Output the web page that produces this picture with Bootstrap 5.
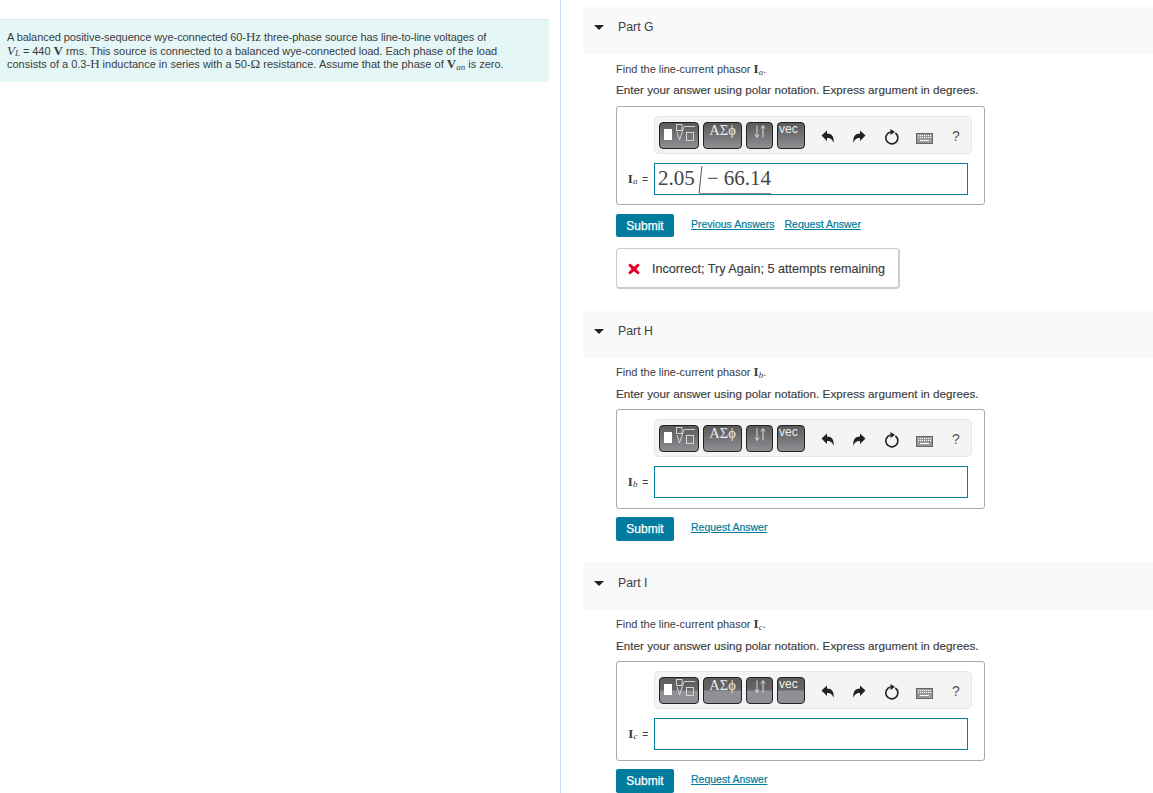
<!DOCTYPE html>
<html lang="en">
<head>
<meta charset="UTF-8" />
<title>Part G, H, I</title>
<link href="https://cdn.jsdelivr.net/npm/bootstrap@5.3.0/dist/css/bootstrap.min.css" rel="stylesheet" />
<style>
  html, body { height: 793px; overflow: hidden; }
  body { font-family: "Liberation Sans", Arial, sans-serif; font-size: 11px; color: #3c3c3c; background: #fff; }
  .left-pane { width: 561px; height: 793px; border-right: 1px solid #c5d9ea; padding-top: 19px; flex: none; }
  .intro-box { width: 549px; height: 63px; background: #e5f6f7; border-top: 1px solid #dde6e6; padding: 10px 0 0 7px; white-space: nowrap; }
  .intro-line { height: 13.5px; line-height: 13.5px; }
  .intro-first { letter-spacing: -.07px; }
  .intro-second { letter-spacing: -.04px; }
  .right-pane { flex: 1; padding: 7px 0 0 22px; min-width: 0; }
  .part-head { height: 47px; background: #f9f9f9; display: flex; align-items: center; font-size: 12.3px; padding-bottom: 6px; }
  .part-arrow { width: 0; height: 0; border-left: 5px solid transparent; border-right: 5px solid transparent; border-top: 5px solid #222; margin: 0 14px 0 11px; }
  .part-body { padding-left: 33px; }
  .prompt { height: 14px; line-height: 14px; margin: 8px 0 0; }
  .prompt-strong { height: 14px; line-height: 14px; margin: 7px 0 0; font-size: 11.7px; -webkit-text-stroke: .15px #3c3c3c; }
  .mv { font-family: "Liberation Serif", serif; font-size: 13px; line-height: 1; }
  .mv sub { font-size: 9px; bottom: -.2em; line-height: 0; }
  .answer-box { width: 369px; height: 99px; border: 1px solid #aaa; border-radius: 3px; margin-top: 9px; padding: 9px 16px 0 0; }
  .tool-row { height: 38px; width: 318px; margin-left: 37px; background: #f4f4f4; border: 1px solid #e6e6e6; border-radius: 5px; display: flex; align-items: center; padding-left: 4px; }
  .tool-btn { height: 27px; border: 1px solid #222; border-radius: 4px; background: linear-gradient(#5a5a5a, #8e8e94); color: #eee; margin-right: 4px; padding: 0; line-height: 15px; text-align: center; flex: none; }
  .tool-hard .tool-btn { background: linear-gradient(#5c5c5c 0, #666 48%, #8f8f96 52%, #8f8f96 100%); }
  .btn-temp { width: 40px; }
  .btn-temp svg { display: block; }
  .btn-greek { width: 39px; font-family: "Liberation Serif", serif; font-size: 14.5px; }
  .btn-arrows { width: 27px; }
  .btn-arrows svg { display: block; margin: 2px auto 0; }
  .btn-vec { width: 28px; font-size: 12px; text-align: left; padding-left: 1px; line-height: 13px; }
  .tool-icon { flex: none; display: block; color: #222; margin-top: 4px; }
  .ic-undo { margin-left: 12px; }
  .ic-redo { margin-left: 17px; }
  .ic-reset { margin-left: 18px; }
  .ic-keys { margin-left: 16px; margin-top: 7px; }
  .help-mark { font-size: 14px; color: #555; width: 12px; text-align: center; margin: 3px 0 0 17px; }
  .input-row { display: flex; align-items: center; margin-top: 9px; }
  .input-label { width: 37px; text-align: right; padding-right: 6px; white-space: nowrap; flex: none; font-size: 10px; word-spacing: 2px; }
  .answer-field { width: 314px; height: 32px; border: 1px solid #007c9e; background: #fff; font-family: "Liberation Serif", serif; font-size: 21px; color: #444; padding-left: 3px; display: flex; align-items: center; flex: none; }
  .angle-mark { position: relative; height: 28px; margin: 1px 0 0 4px; padding-left: 8px; line-height: 24px; border-bottom: 1px solid #888; }
  .angle-mark::before { content: ""; position: absolute; left: 1px; top: 0; bottom: 0; border-left: 1px solid #555; transform: skewX(-6deg); }
  .action-row { display: flex; align-items: center; margin-top: 9px; height: 23px; }
  .btn.submit-btn { width: 58px; height: 100%; padding: 0; background: #007c9e; border: 0; border-radius: 2px; color: #fff; font-size: 12px; -webkit-text-stroke: .25px #fff; }
  .action-link { color: #007c9e; font-size: 10.5px; margin: 0 0 2px 17px; -webkit-text-stroke: .2px #007c9e; }
  .action-link + .action-link { margin-left: 10px; }
  .feedback-box { width: 284px; height: 41px; margin-top: 11px; border: 1px solid #ccc; border-right-width: 2px; border-bottom-width: 2px; border-radius: 4px; display: flex; align-items: center; padding: 2px 0 0 11px; font-size: 12.6px; -webkit-text-stroke: .15px #3c3c3c; }
  .cross-mark { margin-right: 12px; flex: none; }
  .gap-h { margin-top: 22px; }
  .gap-i { margin-top: 21px; height: 48px; }
  .part-h .prompt, .part-i .prompt { margin-top: 7px; }
  .part-h .prompt-strong, .part-i .prompt-strong { margin-top: 8px; }
  .part-h .answer-box, .part-i .answer-box { margin-top: 8px; height: 100px; }
  .part-h .action-row, .part-i .action-row { margin-top: 8px; height: 24px; }
</style>
</head>
<body>
<svg width="0" height="0" class="position-absolute">
  <symbol id="ic-undo" viewBox="0 0 14 14"><path d="M0.5 5.5 L6 0.5 V3.5 C10.5 3.5 13.5 6.5 12.5 13 C11.5 9.5 10 8 6 8 V11 Z" fill="currentColor"/></symbol>
  <symbol id="ic-redo" viewBox="0 0 14 14"><path d="M13.5 5.5 L8 0.5 V3.5 C3.5 3.5 0.5 6.5 1.5 13 C2.5 9.5 4 8 8 8 V11 Z" fill="currentColor"/></symbol>
  <symbol id="ic-reset" viewBox="0 0 16 16"><path d="M11.4 4 A6 6 0 1 1 6.5 3" fill="none" stroke="currentColor" stroke-width="1.6"/><path d="M6.5 0 L11 3 L6.5 6 Z" fill="currentColor"/></symbol>
  <symbol id="ic-keys" viewBox="0 0 17 11"><rect x=".5" y=".5" width="16" height="10" fill="#999" stroke="#666"/><path d="M2 2.5h13M2 4.5h13" stroke="#fff" stroke-width="1" stroke-dasharray="1 1"/><path d="M4 7.5h9" stroke="#fff" stroke-width="1"/></symbol>
  <symbol id="ic-templates" viewBox="0 0 38 26"><rect x="4" y="6" width="8" height="11" fill="#fff"/><rect x="16.5" y="1.5" width="5.5" height="6" fill="none" stroke="#ddd" stroke-width=".9"/><path d="M17 9 L19.5 17 L24 3.5 H35" fill="none" stroke="#ddd" stroke-width=".9"/><rect x="26.5" y="9.5" width="7" height="8" fill="none" stroke="#ddd" stroke-width=".9"/></symbol>
  <symbol id="ic-updown" viewBox="0 0 12 13"><path d="M3 .5V12M1 9.5L3 12.5 5 9.5M9 12.5V1M7 3.5L9 .5 11 3.5" fill="none" stroke="#ddd" stroke-width="1"/></symbol>
  <symbol id="ic-cross" viewBox="0 0 12 12"><path d="M2 0.5 L6 3.8 L10 0.5 L11.8 2.3 L8.4 6 L11.8 9.7 L10 11.5 L6 8.2 L2 11.5 L0.2 9.7 L3.6 6 L0.2 2.3 Z" fill="#e4002b"/></symbol>
</svg>

<div class="d-flex">
  <div class="left-pane">
    <div class="intro-box">
      <div class="intro-line intro-first">A balanced positive-sequence wye-connected 60-<span class="mv">Hz</span> three-phase source has line-to-line voltages of</div>
      <div class="intro-line intro-second"><span class="mv"><i>V<sub>L</sub></i></span> = 440 <span class="mv"><b>V</b></span> rms. This source is connected to a balanced wye-connected load. Each phase of the load</div>
      <div class="intro-line">consists of a 0.3-<span class="mv">H</span> inductance in series with a 50-<span class="mv">Ω</span> resistance. Assume that the phase of <span class="mv"><b>V</b><sub><i>an</i></sub></span> is zero.</div>
    </div>
  </div>

  <div class="right-pane">
    <!-- Part G -->
    <div class="part-head"><span class="part-arrow"></span>Part G</div>
    <div class="part-body">
      <p class="prompt">Find the line-current phasor <span class="mv"><b>I</b><sub><i>a</i></sub></span>.</p>
      <p class="prompt-strong">Enter your answer using polar notation. Express argument in degrees.</p>
      <div class="answer-box">
        <div class="tool-row">
          <div class="tool-btn btn-temp"><svg width="38" height="25" viewBox="0 0 38 25"><use href="#ic-templates" width="38" height="26"/></svg></div>
          <div class="tool-btn btn-greek">ΑΣϕ</div>
          <div class="tool-btn btn-arrows"><svg width="12" height="13"><use href="#ic-updown"/></svg></div>
          <div class="tool-btn btn-vec">vec</div>
          <svg class="tool-icon ic-undo" width="14" height="14"><use href="#ic-undo"/></svg>
          <svg class="tool-icon ic-redo" width="14" height="14"><use href="#ic-redo"/></svg>
          <svg class="tool-icon ic-reset" width="16" height="16"><use href="#ic-reset"/></svg>
          <svg class="tool-icon ic-keys" width="17" height="11"><use href="#ic-keys"/></svg>
          <span class="help-mark">?</span>
        </div>
        <div class="input-row">
          <span class="input-label"><span class="mv"><b>I</b><sub><i>a</i></sub></span> =</span>
          <div class="answer-field">2.05<span class="angle-mark">− 66.14</span></div>
        </div>
      </div>
      <div class="action-row">
        <button class="btn submit-btn">Submit</button>
        <a href="#" class="action-link">Previous Answers</a>
        <a href="#" class="action-link">Request Answer</a>
      </div>
      <div class="feedback-box"><svg class="cross-mark" width="12" height="12"><use href="#ic-cross"/></svg>Incorrect; Try Again; 5 attempts remaining</div>
    </div>

    <!-- Part H -->
    <div class="part-head gap-h"><span class="part-arrow"></span>Part H</div>
    <div class="part-body part-h">
      <p class="prompt">Find the line-current phasor <span class="mv"><b>I</b><sub><i>b</i></sub></span>.</p>
      <p class="prompt-strong">Enter your answer using polar notation. Express argument in degrees.</p>
      <div class="answer-box">
        <div class="tool-row">
          <div class="tool-btn btn-temp"><svg width="38" height="25" viewBox="0 0 38 25"><use href="#ic-templates" width="38" height="26"/></svg></div>
          <div class="tool-btn btn-greek">ΑΣϕ</div>
          <div class="tool-btn btn-arrows"><svg width="12" height="13"><use href="#ic-updown"/></svg></div>
          <div class="tool-btn btn-vec">vec</div>
          <svg class="tool-icon ic-undo" width="14" height="14"><use href="#ic-undo"/></svg>
          <svg class="tool-icon ic-redo" width="14" height="14"><use href="#ic-redo"/></svg>
          <svg class="tool-icon ic-reset" width="16" height="16"><use href="#ic-reset"/></svg>
          <svg class="tool-icon ic-keys" width="17" height="11"><use href="#ic-keys"/></svg>
          <span class="help-mark">?</span>
        </div>
        <div class="input-row">
          <span class="input-label"><span class="mv"><b>I</b><sub><i>b</i></sub></span> =</span>
          <div class="answer-field"></div>
        </div>
      </div>
      <div class="action-row">
        <button class="btn submit-btn">Submit</button>
        <a href="#" class="action-link">Request Answer</a>
      </div>
    </div>

    <!-- Part I -->
    <div class="part-head gap-i"><span class="part-arrow"></span>Part I</div>
    <div class="part-body part-i">
      <p class="prompt">Find the line-current phasor <span class="mv"><b>I</b><sub><i>c</i></sub></span>.</p>
      <p class="prompt-strong">Enter your answer using polar notation. Express argument in degrees.</p>
      <div class="answer-box">
        <div class="tool-row tool-hard">
          <div class="tool-btn btn-temp"><svg width="38" height="25" viewBox="0 0 38 25"><use href="#ic-templates" width="38" height="26"/></svg></div>
          <div class="tool-btn btn-greek">ΑΣϕ</div>
          <div class="tool-btn btn-arrows"><svg width="12" height="13"><use href="#ic-updown"/></svg></div>
          <div class="tool-btn btn-vec">vec</div>
          <svg class="tool-icon ic-undo" width="14" height="14"><use href="#ic-undo"/></svg>
          <svg class="tool-icon ic-redo" width="14" height="14"><use href="#ic-redo"/></svg>
          <svg class="tool-icon ic-reset" width="16" height="16"><use href="#ic-reset"/></svg>
          <svg class="tool-icon ic-keys" width="17" height="11"><use href="#ic-keys"/></svg>
          <span class="help-mark">?</span>
        </div>
        <div class="input-row">
          <span class="input-label"><span class="mv"><b>I</b><sub><i>c</i></sub></span> =</span>
          <div class="answer-field"></div>
        </div>
      </div>
      <div class="action-row">
        <button class="btn submit-btn">Submit</button>
        <a href="#" class="action-link">Request Answer</a>
      </div>
    </div>
  </div>
</div>
<script src="https://cdn.jsdelivr.net/npm/bootstrap@5.3.0/dist/js/bootstrap.bundle.min.js"></script>
</body>
</html>
